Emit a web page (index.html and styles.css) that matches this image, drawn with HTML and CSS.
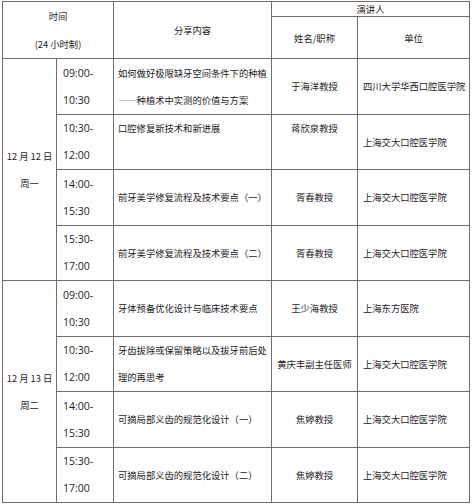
FILE: index.html
```html
<!DOCTYPE html>
<html lang="zh-CN">
<head>
<meta charset="utf-8">
<link rel="stylesheet" href="styles.css">
</head>
<body>
<table class="schedule">
  <colgroup>
    <col class="c-date"><col class="c-time"><col class="c-topic"><col class="c-name"><col class="c-unit">
  </colgroup>
  <thead>
    <tr class="h1">
      <th colspan="2" rowspan="2" class="h-time">时间<br>(24 小时制)</th>
      <th rowspan="2">分享内容</th>
      <th colspan="2" class="h-speaker">演讲人</th>
    </tr>
    <tr class="h2">
      <th>姓名/职称</th>
      <th>单位</th>
    </tr>
  </thead>
  <tbody>
    <tr class="r r-tall">
      <td rowspan="4" class="date">12 月 12 日<br>周一</td>
      <td class="time">09:00-<br>10:30</td>
      <td class="topic lines">如何做好极限缺牙空间条件下的种植<br>——种植术中实测的价值与方案</td>
      <td class="name">于海洋教授</td>
      <td class="unit">四川大学华西口腔医学院</td>
    </tr>
    <tr class="r">
      <td class="time">10:30-<br>12:00</td>
      <td class="topic top">口腔修复新技术和新进展</td>
      <td class="name top">蒋欣泉教授</td>
      <td class="unit">上海交大口腔医学院</td>
    </tr>
    <tr class="r r-tall">
      <td class="time">14:00-<br>15:30</td>
      <td class="topic">前牙美学修复流程及技术要点（一）</td>
      <td class="name">胥春教授</td>
      <td class="unit">上海交大口腔医学院</td>
    </tr>
    <tr class="r">
      <td class="time">15:30-<br>17:00</td>
      <td class="topic">前牙美学修复流程及技术要点（二）</td>
      <td class="name">胥春教授</td>
      <td class="unit">上海交大口腔医学院</td>
    </tr>
    <tr class="r r-tall">
      <td rowspan="4" class="date">12 月 13 日<br>周二</td>
      <td class="time">09:00-<br>10:30</td>
      <td class="topic">牙体预备优化设计与临床技术要点</td>
      <td class="name">王少海教授</td>
      <td class="unit">上海东方医院</td>
    </tr>
    <tr class="r">
      <td class="time">10:30-<br>12:00</td>
      <td class="topic lines">牙齿拔除或保留策略以及拔牙前后处<br>理的再思考</td>
      <td class="name">黄庆丰副主任医师</td>
      <td class="unit">上海交大口腔医学院</td>
    </tr>
    <tr class="r r-tall">
      <td class="time">14:00-<br>15:30</td>
      <td class="topic">可摘局部义齿的规范化设计（一）</td>
      <td class="name">焦婷教授</td>
      <td class="unit">上海交大口腔医学院</td>
    </tr>
    <tr class="r">
      <td class="time">15:30-<br>17:00</td>
      <td class="topic">可摘局部义齿的规范化设计（二）</td>
      <td class="name">焦婷教授</td>
      <td class="unit">上海交大口腔医学院</td>
    </tr>
  </tbody>
</table>
</body>
</html>
```

FILE: styles.css
```css
html, body {
  background: #fff;
}
body {
  margin: 1px 0 0 2px;
  font-family: "Noto Sans CJK SC", "Noto Sans", sans-serif;
  font-size: 9.3px;
  color: #1c1c1c;
}
.schedule {
  border-collapse: collapse;
  table-layout: fixed;
  width: 467px;
  border: 1px solid #8a8a8a;
}
.c-date { width: 54px; }
.c-time { width: 57px; }
.c-topic { width: 158px; }
.c-name { width: 86px; }
.c-unit { width: 112px; }

.schedule th,
.schedule td {
  border: 1px solid #6e6e6e;
  padding: 0;
  font-weight: normal;
  vertical-align: middle;
  white-space: nowrap;
}
.schedule th {
  text-align: center;
}
.h1 th { height: 14px; line-height: 14px; }
.h1 th.h-time, .h1 th[rowspan] { line-height: 28px; }
.h2 th { height: 40px; }

.r td { height: 54px; }
.r-tall td { height: 55px; }

.time {
  padding-left: 6px !important;
  line-height: 27px;
  font-family: "Open Sans", "Noto Sans CJK SC", sans-serif;
  font-size: 10.5px;
}
.date {
  text-align: center;
  line-height: 27px;
}
.topic {
  padding-left: 4px !important;
  line-height: 27px;
}
.name {
  text-align: center;
  line-height: 27px;
}
.unit {
  padding-left: 5px !important;
  line-height: 27px;
}
.top {
  vertical-align: top !important;
}
```
